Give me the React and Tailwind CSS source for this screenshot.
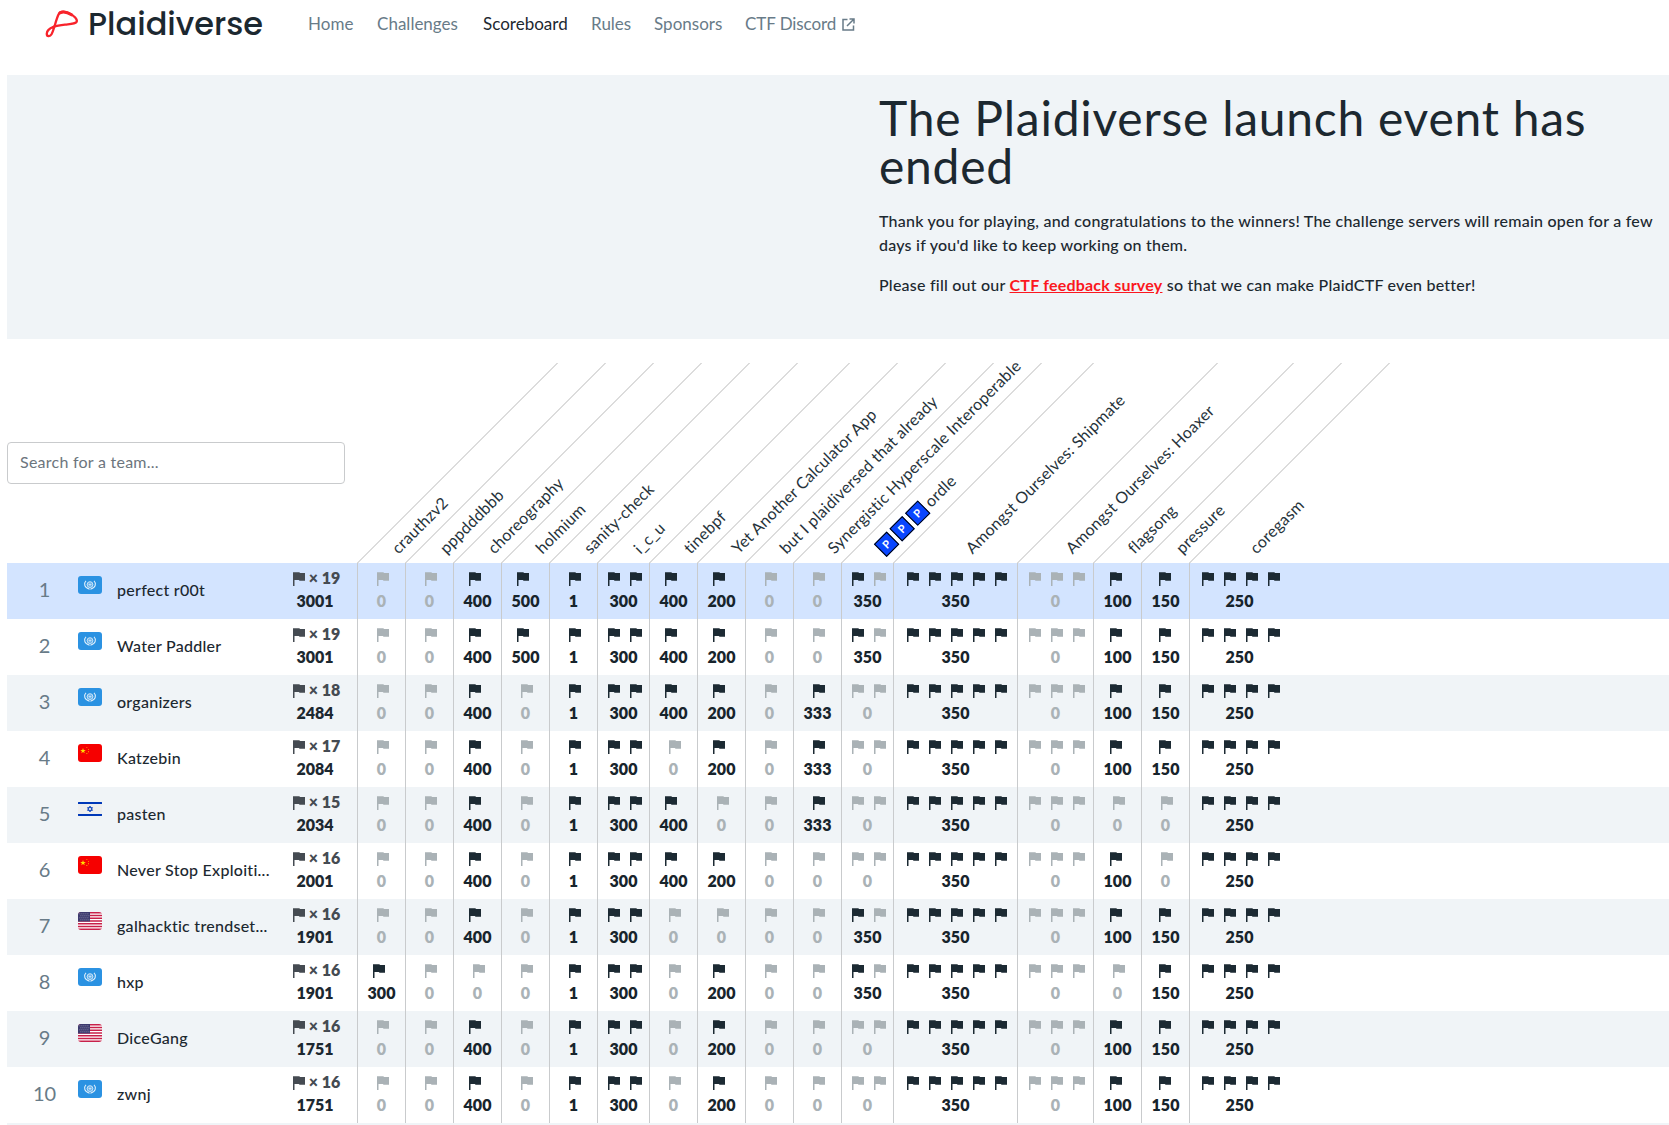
import clsx from "clsx";

const NAV = [
    { label: "Home", w: "w-[45px]" },
    { label: "Challenges", w: "w-[82px]" },
    { label: "Scoreboard", w: "w-[84px]", active: true },
    { label: "Rules", w: "w-[39px]" },
    { label: "Sponsors", w: "w-[67px]" },
];

// name, number of flags, column width
const COLUMNS = [
    { name: "crauthzv2", flags: 1, w: "w-12" },
    { name: "pppdddbbb", flags: 1, w: "w-12" },
    { name: "choreography", flags: 1, w: "w-12" },
    { name: "holmium", flags: 1, w: "w-12" },
    { name: "sanity-check", flags: 1, w: "w-12" },
    { name: "i_c_u", flags: 2, w: "w-[52px]" },
    { name: "tinebpf", flags: 1, w: "w-12" },
    { name: "Yet Another Calculator App", flags: 1, w: "w-12" },
    { name: "but I plaidiversed that already", flags: 1, w: "w-12" },
    { name: "Synergistic Hyperscale Interoperable", flags: 1, w: "w-12" },
    { name: "ordle", flags: 2, w: "w-[52px]", tiles: true },
    { name: "Amongst Ourselves: Shipmate", flags: 5, w: "w-[124px]" },
    { name: "Amongst Ourselves: Hoaxer", flags: 3, w: "w-[76px]" },
    { name: "flagsong", flags: 1, w: "w-12" },
    { name: "pressure", flags: 1, w: "w-12" },
    { name: "coregasm", flags: 4, w: "w-[100px]" },
];

const TEAMS = [
    { name: "perfect r00t", country: "un", count: 19, total: 3001, scores: [0, 0, 400, 500, 1, 300, 400, 200, 0, 0, 350, 350, 0, 100, 150, 250] },
    { name: "Water Paddler", country: "un", count: 19, total: 3001, scores: [0, 0, 400, 500, 1, 300, 400, 200, 0, 0, 350, 350, 0, 100, 150, 250] },
    { name: "organizers", country: "un", count: 18, total: 2484, scores: [0, 0, 400, 0, 1, 300, 400, 200, 0, 333, 0, 350, 0, 100, 150, 250] },
    { name: "Katzebin", country: "cn", count: 17, total: 2084, scores: [0, 0, 400, 0, 1, 300, 0, 200, 0, 333, 0, 350, 0, 100, 150, 250] },
    { name: "pasten", country: "il", count: 15, total: 2034, scores: [0, 0, 400, 0, 1, 300, 400, 0, 0, 333, 0, 350, 0, 0, 0, 250] },
    { name: "Never Stop Exploiti...", country: "cn", count: 16, total: 2001, scores: [0, 0, 400, 0, 1, 300, 400, 200, 0, 0, 0, 350, 0, 100, 0, 250] },
    { name: "galhacktic trendset...", country: "us", count: 16, total: 1901, scores: [0, 0, 400, 0, 1, 300, 0, 0, 0, 0, 350, 350, 0, 100, 150, 250] },
    { name: "hxp", country: "un", count: 16, total: 1901, scores: [300, 0, 0, 0, 1, 300, 0, 200, 0, 0, 350, 350, 0, 0, 150, 250] },
    { name: "DiceGang", country: "us", count: 16, total: 1751, scores: [0, 0, 400, 0, 1, 300, 0, 200, 0, 0, 0, 350, 0, 100, 150, 250] },
    { name: "zwnj", country: "un", count: 16, total: 1751, scores: [0, 0, 400, 0, 1, 300, 0, 200, 0, 0, 0, 350, 0, 100, 150, 250] },
];

const FlagIcon = ({ className }) => (
    <svg viewBox="0 0 12 14" className={clsx("h-3.5 w-3 shrink-0", className)} fill="currentColor">
        <path d="M0 0.200H6.200L7.200 1H12V8.800H6.600L5.800 8H1.500V14H0Z" />
    </svg>
);

const CountryFlag = ({ country }) => (
    <svg viewBox="0 0 24 18" className="h-[18px] w-6 overflow-hidden rounded-[3px]">
        {country === "un" && (
            <>
                <rect width="24" height="18" fill="#2b92e2" />
                <g fill="none" stroke="#fff" opacity=".85">
                    <circle cx="12" cy="8.6" r="2.9" strokeWidth=".9" />
                    <path d="M9.3 8.6h5.4M12 6v5.3M10 6.7l4 3.8M14 6.7l-4 3.8" strokeWidth=".6" />
                    <path d="M8 4.800C5.600 7.2 6 11.6 11.6 13.200M16 4.800c2.4 2.400 2 6.800-3.600 8.400" strokeWidth="1.100" />
                </g>
            </>
        )}
        {country === "cn" && (
            <>
                <rect width="24" height="18" fill="#f60000" />
                <path d="M5 4l.7 2h2.1L6.1 7.2l.6 2L5 8 3.3 9.2l.6-2L2.2 6h2.1z" fill="#ffde00" />
                <path d="M8.4 3.2h.9v.9h-.9zM10 4.9h.9v.9H10zM10 7.3h.9v.9H10zM8.4 9h.9v.9h-.9z" fill="#ffb000" />
            </>
        )}
        {country === "il" && (
            <>
                <rect y="2" width="24" height="14" fill="#eeeeee" />
                <path d="M0 2h24v2H0zM0 14h24v2H0z" fill="#0038b8" />
                <path d="M12 6l2.5 4.4H9.5zM12 12L9.500 7.6h5z" fill="none" stroke="#0038b8" strokeWidth=".8" />
            </>
        )}
        {country === "us" && (
            <>
                <rect width="24" height="18" fill="#fff" />
                <path d="M0 .7h24M0 3.46h24M0 6.23h24M0 9h24M0 11.77h24M0 14.54h24M0 17.3h24" stroke="#c8204a" strokeWidth="1.4" />
                <rect width="12" height="9.5" fill="#3c3b6e" />
                <path d="M1.5 1.8h10M2.5 3.8h9M1.5 5.8h10M2.5 7.8h9" stroke="#fff" strokeWidth=".7" strokeDasharray=".8 1.2" opacity=".7" />
            </>
        )}
    </svg>
);

const Navbar = () => (
    <header className="flex h-[75px] items-start pl-[45px]">
        <div className="flex h-12 items-center">
            <svg viewBox="0 0 34 28" className="h-7 w-[34px]" fill="none" stroke="#f8232b" strokeLinecap="round" strokeLinejoin="round">
                <path d="M8.5 16.8C5 18 2 20.500 1.800 23.500C1.600 26.800 5 27 6.500 24.300C9.500 18.500 10.500 11 13.500 4.500C15 1.300 19.500 1.300 24 3.200" strokeWidth="2.300" />
                <path d="M24 3.200C29 5.300 33 9.500 31.500 12C30 14 25.500 14 20 14.600C15 15.200 11.500 15.800 8.500 16.800" strokeWidth="2.300" />
                <path d="M15 2.800C18 1.500 22.500 2.200 26.500 4.800" strokeWidth="3" />
            </svg>
            <span className="ml-[9px] font-[Poppins,Inter,sans-serif] text-[32px] font-medium">Plaidiverse</span>
        </div>
        <nav className="ml-[45px] flex h-12 items-center gap-6 pb-px text-[17px] text-[#687b88]">
            {NAV.map((item) => (
                <a key={item.label} href="#" className={clsx("whitespace-nowrap", item.w, item.active && "text-[#1c2830]")}>
                    {item.label}
                </a>
            ))}
            <a href="#" className="flex items-center gap-1.5 pt-px tracking-[-0.1px] whitespace-nowrap">
                CTF Discord
                <svg viewBox="0 0 13 13" className="size-[13px]" fill="none" stroke="currentColor" strokeWidth="1.5">
                    <path d="M5.5 1.5H1V12H11.5V7.5M7.5 1H12V5.5M12 1L5 8" />
                </svg>
            </a>
        </nav>
    </header>
);

const Banner = () => (
    <section className="ml-[7px] flex h-[264px] justify-end bg-[#f0f4f7]">
        <div className="w-[790px] pt-[19px]">
            <h1 className="text-[48px] leading-12 tracking-[0.74px]">
                The Plaidiverse launch event has
                <br />
                ended
            </h1>
            <p className="mt-[19px] text-base leading-6 font-medium tracking-[0.23px]">
                Thank you for playing, and congratulations to the winners! The challenge servers will remain open for a few
                <br />
                days if you'd like to keep working on them.
            </p>
            <p className="mt-4 text-base leading-6 font-medium tracking-[0.22px]">
                Please fill out our{" "}
                <a href="#" className="font-bold text-[#fb1720] underline">CTF feedback survey</a>{" "}
                so that we can make PlaidCTF even better!
            </p>
        </div>
    </section>
);

const HeaderCell = ({ column }) => (
    <div className={clsx("relative h-[200px] shrink-0", column.w)}>
        <div className="absolute inset-0 origin-bottom -skew-x-45 border-l border-[#b9b9b9]" />
        <div className="absolute -bottom-1.5 left-1/2 ml-[9px] flex h-5 origin-bottom-left -rotate-45 items-center pl-4 text-base leading-5 tracking-[0.25px] whitespace-nowrap text-[#26333b]">
            {column.tiles &&
                [0, 1, 2].map((i) => (
                    <span key={i} className="mr-1 flex size-[18px] items-center justify-center border border-black bg-[#0a46ff] text-[11px] font-bold text-white">
                        P
                    </span>
                ))}
            {column.name}
        </div>
    </div>
);

const flagShift = (column, score) => {
    if (column.flags > 1 || score < 100 || score === 333) return "ml-0.5";
    if (score === 150) return "-ml-px";
    if (score === 100) return "-ml-1";
    return "-ml-1.5";
};

const ScoreCell = ({ column, score }) => {
    const solved = column.tiles && score ? 1 : score ? column.flags : 0;
    return (
        <div className={clsx("flex h-14 shrink-0 flex-col items-center border-l border-[#c9cbcd] pt-[9px]", column.w)}>
            <div className={clsx("flex gap-2.5", flagShift(column, score))}>
                {Array.from({ length: column.flags }, (_, i) => (
                    <FlagIcon key={i} className={i < solved ? "text-[#1c2a33]" : "text-[#aab2b6]"} />
                ))}
            </div>
            <div className={clsx("text-base leading-[29px] font-extrabold", score ? "text-[#17242c]" : "text-[#aab2b6]")}>{score}</div>
        </div>
    );
};

const TeamRow = ({ team, rank }) => (
    <div className={clsx("flex h-14 w-full", rank === 1 ? "bg-[#d3e4ff]" : rank % 2 ? "bg-[#f0f4f7]" : "bg-white")}>
        <div className="w-[71px] shrink-0 pl-1 text-center text-xl leading-[52px] text-[#687b88]">{rank}</div>
        <div className="w-[39px] shrink-0 pt-[13px]">
            <CountryFlag country={team.country} />
        </div>
        <div className="w-[164px] shrink-0 text-base leading-[53px] font-medium tracking-[0.27px] whitespace-nowrap">{team.name}</div>
        <div className="flex w-[76px] shrink-0 flex-col items-center pt-[3px] pr-2 font-extrabold">
            <div className="flex items-center gap-1 pl-[3px] leading-6 text-[#454b52]">
                <FlagIcon className="mt-0.5" /> × {team.count}
            </div>
            <div className="leading-[22px]">{team.total}</div>
        </div>
        {COLUMNS.map((column, i) => (
            <ScoreCell key={column.name} column={column} score={team.scores[i]} />
        ))}
    </div>
);

export default function App() {
    return (
        <div className="h-[1125px] w-full overflow-hidden bg-white font-[Lato,sans-serif] text-[#1c2830]">
            <Navbar />
            <Banner />
            <main className="ml-[7px] pt-6">
                <div className="flex h-[200px] overflow-hidden">
                    <div className="w-[350px] shrink-0 pt-[79px]">
                        <input
                            className="h-[42px] w-[338px] rounded border border-[#c9cbcd] px-3 pb-1 text-base tracking-[0.25px] placeholder:text-[#6c757d]"
                            placeholder="Search for a team..."
                        />
                    </div>
                    {COLUMNS.map((column) => (
                        <HeaderCell key={column.name} column={column} />
                    ))}
                </div>
                {TEAMS.map((team, i) => (
                    <TeamRow key={team.name} team={team} rank={i + 1} />
                ))}
                <div className="h-14 bg-[#f0f4f7]" />
            </main>
        </div>
    );
}
